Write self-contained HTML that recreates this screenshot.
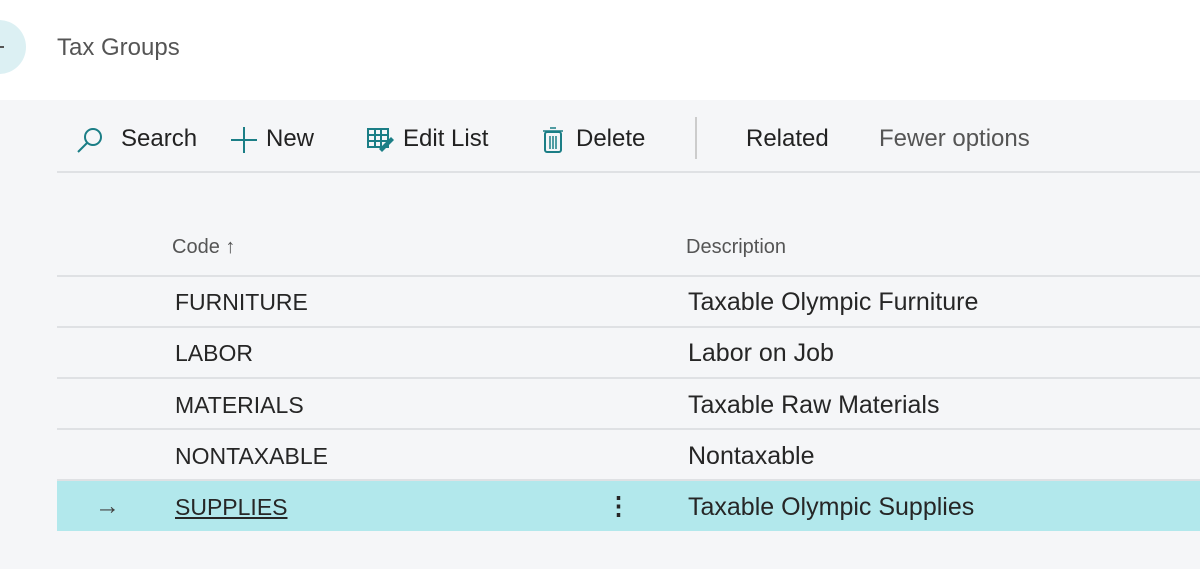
<!DOCTYPE html>
<html><head><style>
body{margin:0;width:1200px;height:569px;overflow:hidden;background:#f5f6f8;font-family:"Liberation Sans",sans-serif;position:relative}
.hdr{position:absolute;left:0;top:0;width:1200px;height:100px;background:#fff}
.circ{position:absolute;left:-28px;top:20px;width:54px;height:54px;border-radius:50%;background:#dcf0f3}
.circ:after{content:"";position:absolute;left:24px;top:26px;width:8px;height:2px;background:#555}
.t{position:absolute;white-space:nowrap}
.title{left:57px;top:34px;font-size:24px;color:#555}
.tb{top:125px;font-size:24px;color:#222}
.line{position:absolute;left:57px;width:1143px;height:2px;background:#dfe1e4}
.cell{font-size:25px;color:#262626}
.code{font-size:23px;color:#262626}
</style></head><body>
<div class="hdr"></div>
<div class="circ"></div>
<div class="t title">Tax Groups</div>

<svg class="t" style="left:76px;top:126px" width="30" height="30" viewBox="0 0 30 30"><circle cx="17" cy="11" r="8" fill="none" stroke="#1b7e86" stroke-width="2"/><path d="M11 17 L2 26" stroke="#1b7e86" stroke-width="2"/></svg>
<div class="t tb" style="left:121px">Search</div>
<svg class="t" style="left:229px;top:125px" width="30" height="30" viewBox="0 0 30 30"><path d="M15 2V28M2 15H28" stroke="#1b7e86" stroke-width="2"/></svg>
<div class="t tb" style="left:266px">New</div>
<svg class="t" style="left:367px;top:127px" width="30" height="26" viewBox="0 0 30 26"><rect x="1" y="2" width="20" height="18" fill="none" stroke="#1b7e86" stroke-width="2"/><path d="M1 8H21M1 14H21M8 2V20M14 2V20" stroke="#1b7e86" stroke-width="2"/><path d="M12 22L24 10L27 13L15 25Z" fill="#1b7e86"/></svg>
<div class="t tb" style="left:403px">Edit List</div>
<svg class="t" style="left:542px;top:125px" width="22" height="30" viewBox="0 0 22 30"><rect x="3" y="7" width="16" height="20" rx="2" fill="none" stroke="#1b7e86" stroke-width="2"/><path d="M1 6H21M8 3H14M8 11V24M11 11V24M14 11V24" stroke="#1b7e86" stroke-width="1.5"/></svg>
<div class="t tb" style="left:576px">Delete</div>
<div class="t" style="left:695px;top:117px;width:2px;height:42px;background:#ccc"></div>
<div class="t tb" style="left:746px">Related</div>
<div class="t tb" style="left:879px;color:#555">Fewer options</div>
<div class="line" style="top:171px"></div>

<div class="t" style="left:172px;top:236px;font-size:20px;color:#555">Code ↑</div>
<div class="t" style="left:686px;top:236px;font-size:20px;color:#555">Description</div>
<div class="line" style="top:275px"></div>
<div class="t code" style="left:175px;top:289px">FURNITURE</div><div class="t cell" style="left:688px;top:288px">Taxable Olympic Furniture</div>
<div class="line" style="top:326px"></div>
<div class="t code" style="left:175px;top:340px">LABOR</div><div class="t cell" style="left:688px;top:339px">Labor on Job</div>
<div class="line" style="top:377px"></div>
<div class="t code" style="left:175px;top:392px">MATERIALS</div><div class="t cell" style="left:688px;top:391px">Taxable Raw Materials</div>
<div class="line" style="top:428px"></div>
<div class="t code" style="left:175px;top:443px">NONTAXABLE</div><div class="t cell" style="left:688px;top:442px">Nontaxable</div>
<div class="line" style="top:479px"></div>
<div class="t" style="left:57px;top:481px;width:1143px;height:50px;background:#b2e8ec"></div>
<div class="t cell" style="left:95px;top:492px;color:#444">→</div>
<div class="t code" style="left:175px;top:494px;text-decoration:underline">SUPPLIES</div>
<div class="t cell" style="left:606px;top:491px;font-weight:bold">⋮</div>
<div class="t cell" style="left:688px;top:493px">Taxable Olympic Supplies</div>
</body></html>
